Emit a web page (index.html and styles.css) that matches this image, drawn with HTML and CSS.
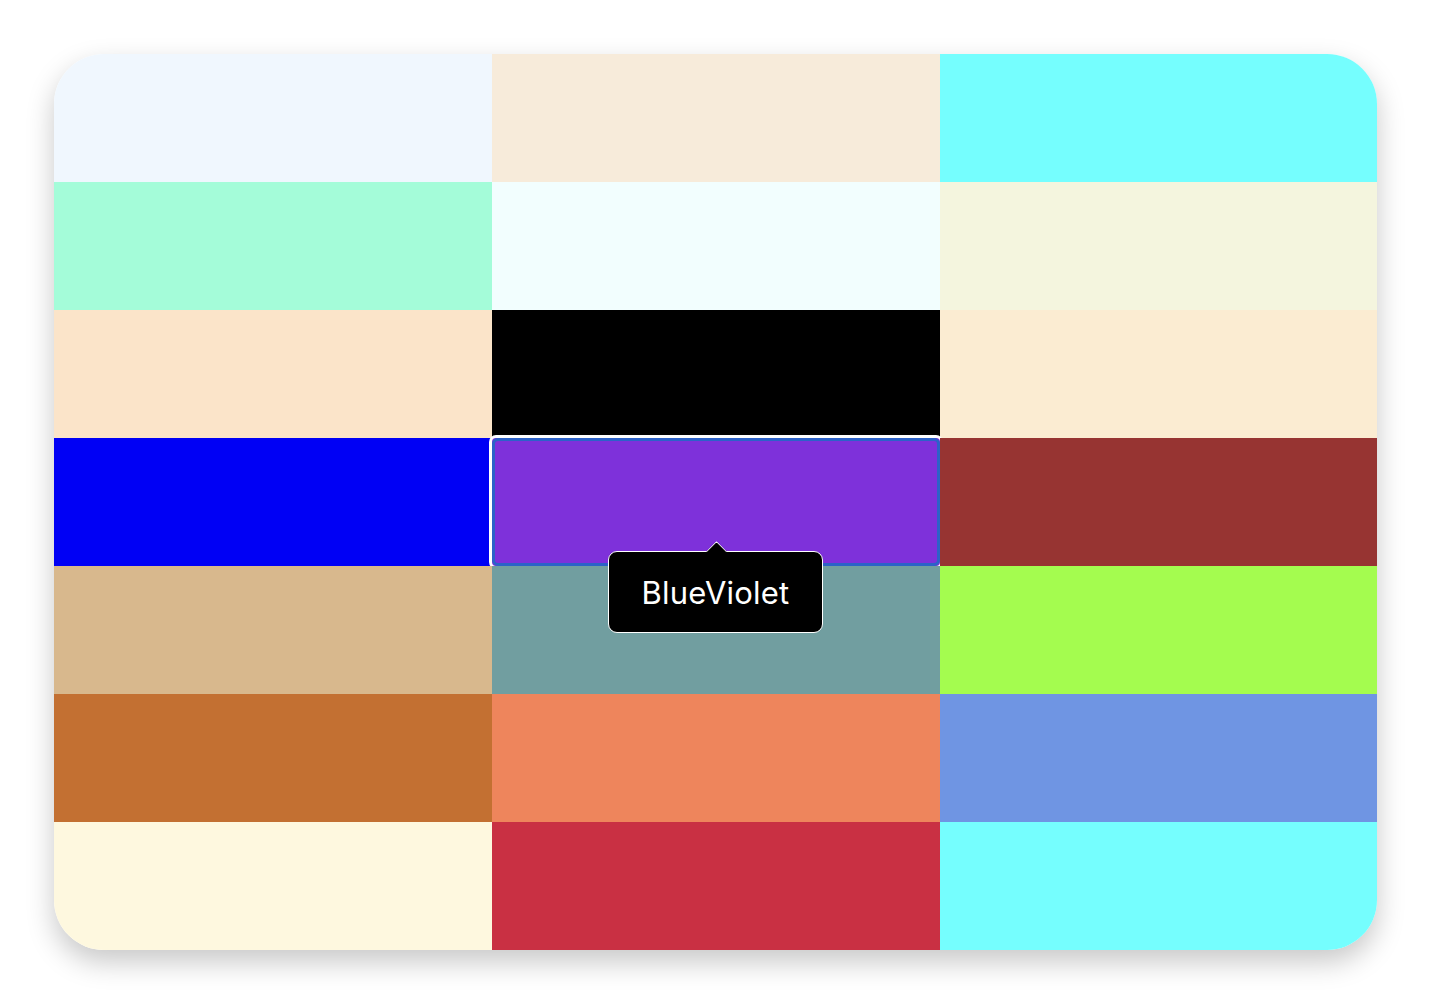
FILE: index.html
```html
<!DOCTYPE html>
<html>
<head>
<meta charset="utf-8">
<link rel="stylesheet" href="styles.css">
</head>
<body>
<div class="card">
  <div class="cell c-aliceblue"></div>
  <div class="cell c-antiquewhite"></div>
  <div class="cell c-aqua"></div>
  <div class="cell c-aquamarine"></div>
  <div class="cell c-azure"></div>
  <div class="cell c-beige"></div>
  <div class="cell c-bisque"></div>
  <div class="cell c-black"></div>
  <div class="cell c-blanchedalmond"></div>
  <div class="cell c-blue"></div>
  <div class="cell c-blueviolet active">
    <div class="tooltip">BlueViolet</div>
  </div>
  <div class="cell c-brown"></div>
  <div class="cell c-burlywood"></div>
  <div class="cell c-cadetblue"></div>
  <div class="cell c-chartreuse"></div>
  <div class="cell c-chocolate"></div>
  <div class="cell c-coral"></div>
  <div class="cell c-cornflowerblue"></div>
  <div class="cell c-cornsilk"></div>
  <div class="cell c-crimson"></div>
  <div class="cell c-cyan"></div>
</div>
</body>
</html>
```
FILE: styles.css
```css
html, body {
  margin: 0;
  padding: 0;
  background: #ffffff;
}
body {
  padding: 54px;
  font-family: Inter, "Noto Sans", sans-serif;
}
.card {
  width: 1323px;
  display: grid;
  grid-template-columns: 438px 448px 437px;
  grid-auto-rows: 128px;
  border-radius: 50px;
  overflow: hidden;
  box-shadow: 0 12px 28px rgba(0, 0, 0, 0.22);
}
.cell {
  position: relative;
}
.active {
  border-radius: 4px;
  box-shadow: 0 0 0 3px #ffffff;
}
.active::after {
  content: "";
  position: absolute;
  inset: 0;
  border: 3px solid #2c62c8;
  border-radius: 6px;
}
.tooltip {
  position: absolute;
  z-index: 3;
  left: 116px;
  top: 113px;
  width: 215px;
  height: 82px;
  box-sizing: border-box;
  background: #000;
  border: 1.5px solid #fff;
  border-radius: 9px;
  color: #fff;
  font-size: 31px;
  letter-spacing: 0.2px;
  display: flex;
  align-items: center;
  justify-content: center;
}
.tooltip::before {
  content: "";
  position: absolute;
  left: 50%;
  top: -8px;
  width: 14px;
  height: 14px;
  margin-left: -7px;
  background: #000;
  border-left: 1.5px solid #fff;
  border-top: 1.5px solid #fff;
  transform: rotate(45deg);
  border-top-left-radius: 2px;
}
.c-aliceblue { background: #f0f7fe; }
.c-antiquewhite { background: #f7ebda; }
.c-aqua { background: #75fefe; }
.c-aquamarine { background: #a4fcd9; }
.c-azure { background: #f2fefe; }
.c-beige { background: #f4f5de; }
.c-bisque { background: #fbe4c9; }
.c-black { background: #000000; }
.c-blanchedalmond { background: #fbecd2; }
.c-blue { background: #0000f5; }
.c-blueviolet { background: #7e31da; }
.c-brown { background: #973432; }
.c-burlywood { background: #d8b88d; }
.c-cadetblue { background: #719ea0; }
.c-chartreuse { background: #a4fc4f; }
.c-chocolate { background: #c37032; }
.c-coral { background: #ee855c; }
.c-cornflowerblue { background: #6f95e3; }
.c-cornsilk { background: #fef8df; }
.c-crimson { background: #c93043; }
.c-cyan { background: #75fefe; }
```
